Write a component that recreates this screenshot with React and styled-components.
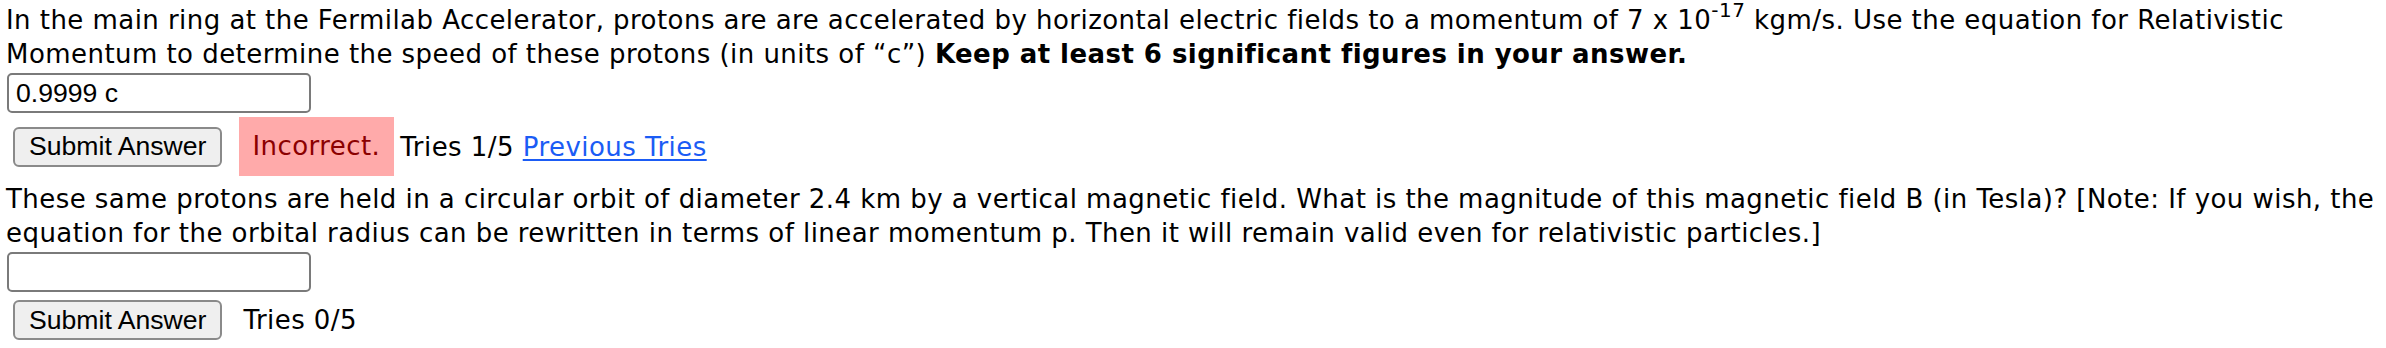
import React from "react";
import styled, { createGlobalStyle } from "styled-components";

const GlobalStyle = createGlobalStyle`
  html, body {
    margin: 0;
    padding: 0;
    background: #ffffff;
  }
`;

const Page = styled.div`
  padding: 3px 2px 0 6px;
  font-family: "DejaVu Sans", Verdana, sans-serif;
  font-size: 26px;
  line-height: 34px;
  letter-spacing: 0.45px;
  color: #000000;
`;

const Question = styled.div`
  display: flex;
  flex-direction: column;
  align-items: flex-start;
  margin-top: ${(props) => props.$top || 0}px;
`;

const Prompt = styled.p`
  margin: 0;
`;

const Sup = styled.sup`
  font-size: 20px;
  line-height: 0;
  vertical-align: 12px;
`;

const AnswerInput = styled.input`
  box-sizing: border-box;
  width: 304px;
  height: 40px;
  margin: 2px 0 0 1px;
  padding: 0 7px;
  border: 2px solid #7a7a7a;
  border-radius: 5px;
  background: #ffffff;
  font-family: "Liberation Sans", Arial, sans-serif;
  font-size: 26.6px;
  color: #000000;
  outline: none;
`;

const ActionRow = styled.div`
  display: flex;
  align-items: center;
  margin-top: ${(props) => props.$top}px;
  padding-left: 7px;
`;

const SubmitButton = styled.button`
  box-sizing: border-box;
  height: 40px;
  padding: 0 14px;
  border: 2px solid #8a8a8a;
  border-radius: 6px;
  background: #efefef;
  font-family: "Liberation Sans", Arial, sans-serif;
  font-size: 26.6px;
  color: #000000;
  line-height: 1;
`;

const Verdict = styled.span`
  margin-left: 17px;
  padding: 12px 14px 13px 13px;
  background: #ffaaaa;
  color: #8b0000;
`;

const Tries = styled.span`
  margin-left: ${(props) => props.$gap}px;
  white-space: pre;
`;

const PrevLink = styled.a`
  color: #1b5cf5;
  text-decoration: underline;
  text-underline-offset: 3px;
  cursor: pointer;
`;

export default function App() {
  return (
    <>
      <GlobalStyle />
      <Page>
        <Question>
          <Prompt>
            In the main ring at the Fermilab Accelerator, protons are are
            accelerated by horizontal electric fields to a momentum of 7 x 10
            <Sup>-17</Sup> kgm/s. Use the equation for Relativistic Momentum to
            determine the speed of these protons (in units of “c”){" "}
            <b>Keep at least 6 significant figures in your answer.</b>
          </Prompt>
          <AnswerInput defaultValue="0.9999 c" />
        </Question>
        <ActionRow $top={4}>
          <SubmitButton>Submit Answer</SubmitButton>
          <Verdict>Incorrect.</Verdict>
          <Tries $gap={6}>
            {"Tries 1/5 "}
            <PrevLink>Previous Tries</PrevLink>
          </Tries>
        </ActionRow>
        <Question $top={6}>
          <Prompt>
            These same protons are held in a circular orbit of diameter 2.4 km
            by a vertical magnetic field. What is the magnitude of this magnetic
            field B (in Tesla)? [Note: If you wish, the equation for the orbital
            radius can be rewritten in terms of linear momentum p. Then it will
            remain valid even for relativistic particles.]
          </Prompt>
          <AnswerInput defaultValue="" />
        </Question>
        <ActionRow $top={8}>
          <SubmitButton>Submit Answer</SubmitButton>
          <Tries $gap={21}>Tries 0/5</Tries>
        </ActionRow>
      </Page>
    </>
  );
}
